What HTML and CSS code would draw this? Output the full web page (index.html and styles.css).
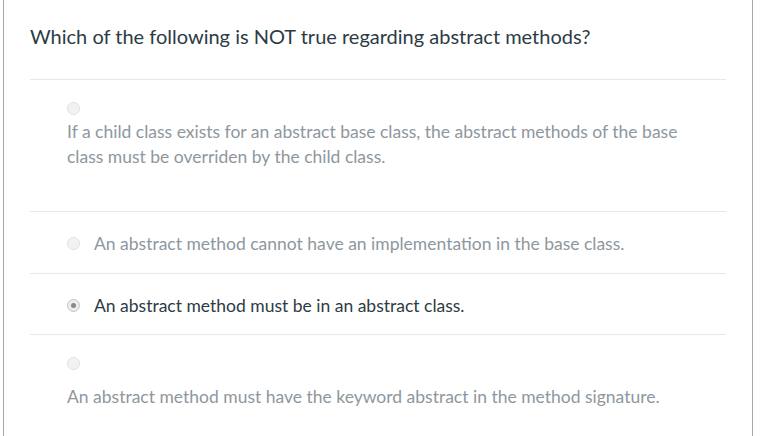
FILE: index.html
```html
<!DOCTYPE html>
<html lang="en">
<head>
<meta charset="utf-8">
<title>Quiz question</title>
<link rel="stylesheet" href="styles.css">
</head>
<body>
<div class="card">
  <div class="question">Which of the following is NOT true regarding abstract methods?</div>
  <div class="answers">
    <label class="answer stacked first">
      <span class="radio"></span>
      <span class="answer-text">If a child class exists for an abstract base class, the abstract methods of the base class must be overriden by the child class.</span>
    </label>
    <label class="answer inline second">
      <span class="radio"></span>
      <span class="answer-text">An abstract method cannot have an implementation in the base class.</span>
    </label>
    <label class="answer inline third selected">
      <span class="radio"></span>
      <span class="answer-text">An abstract method must be in an abstract class.</span>
    </label>
    <label class="answer stacked last">
      <span class="radio"></span>
      <span class="answer-text">An abstract method must have the keyword abstract in the method signature.</span>
    </label>
  </div>
</div>
</body>
</html>
```

FILE: styles.css
```css
html, body {
  margin: 0;
  padding: 0;
  background: #ffffff;
}

body {
  font-family: Lato, "Liberation Sans", sans-serif;
  color: #2d3b45;
}

.card {
  margin-left: 3px;
  width: 750px;
  min-height: 436px;
  border-left: 1px solid #a9a9a9;
  border-right: 1px solid #a9a9a9;
  padding: 0 26px;
  box-sizing: border-box;
}

.question {
  font-size: 20px;
  line-height: 24px;
  padding: 24px 0 31px;
  border-bottom: 1px solid #e8e8e8;
  color: #2d3b45;
}

.answers {
  display: flex;
  flex-direction: column;
}

.answer {
  display: flex;
  padding: 0 37px;
  border-bottom: 1px solid #e8e8e8;
  font-size: 17.5px;
  line-height: 25px;
  color: #8e979e;
}

.answer.stacked {
  flex-direction: column;
  align-items: flex-start;
}

.answer.first {
  padding-top: 22px;
  padding-bottom: 42px;
}

.answer.first .answer-text {
  margin-top: 4px;
}

.answer.last {
  padding-top: 22px;
  border-bottom: none;
}

.answer.last .answer-text {
  margin-top: 14px;
}

.answer.inline {
  flex-direction: row;
  align-items: center;
}

.answer.second {
  padding-top: 19px;
  padding-bottom: 17px;
}

.answer.third {
  padding-top: 19px;
  padding-bottom: 16px;
}

.answer.inline .radio {
  margin-right: 14px;
}

.radio {
  flex: none;
  width: 13px;
  height: 13px;
  border-radius: 50%;
  box-sizing: border-box;
  border: 1px solid #e0e0e0;
  background: #f2f2f2;
  position: relative;
}

.answer.selected {
  color: #2d3b45;
}

.answer.selected .radio {
  border-color: #c4c4c4;
  background: #ececec;
}

.answer.selected .radio::after {
  content: "";
  position: absolute;
  left: 3px;
  top: 3px;
  width: 5px;
  height: 5px;
  border-radius: 50%;
  background: #8a8a8a;
}
```
